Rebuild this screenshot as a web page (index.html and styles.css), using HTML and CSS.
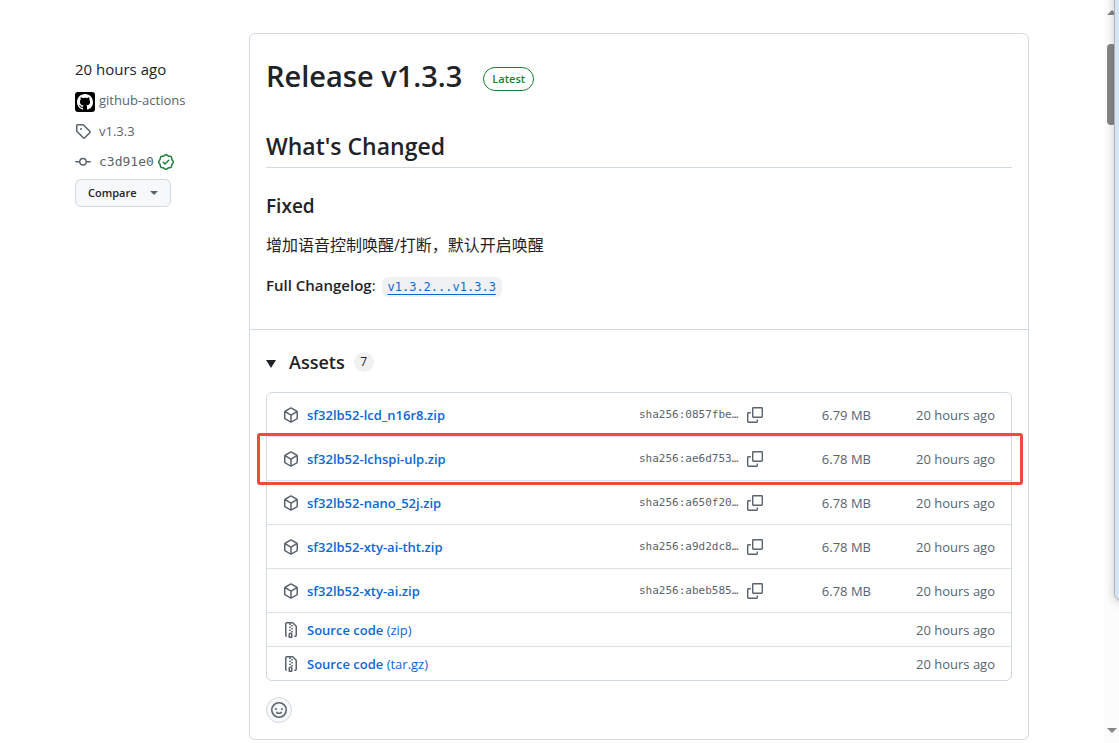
FILE: index.html
```html
<!DOCTYPE html>
<html lang="en">
<head>
<meta charset="utf-8">
<title>Release v1.3.3</title>
<link rel="stylesheet" href="styles.css">
</head>
<body>
<svg class="defs" aria-hidden="true">
  <symbol id="i-tag" viewBox="0 0 16 16"><path d="M1 7.775V2.75C1 1.784 1.784 1 2.75 1h5.025c.464 0 .91.184 1.238.513l6.25 6.25a1.75 1.75 0 0 1 0 2.474l-5.026 5.026a1.75 1.75 0 0 1-2.474 0l-6.25-6.25A1.752 1.752 0 0 1 1 7.775Zm1.5 0c0 .066.026.13.073.177l6.25 6.25a.25.25 0 0 0 .354 0l5.025-5.025a.25.25 0 0 0 0-.354l-6.25-6.25a.25.25 0 0 0-.177-.073H2.75a.25.25 0 0 0-.25.25ZM6 5a1 1 0 1 1 0 2 1 1 0 0 1 0-2Z"/></symbol>
  <symbol id="i-commit" viewBox="0 0 16 16"><path d="M11.93 8.5a4.002 4.002 0 0 1-7.86 0H.75a.75.75 0 0 1 0-1.5h3.32a4.002 4.002 0 0 1 7.86 0h3.32a.75.75 0 0 1 0 1.5Zm-1.43-.75a2.5 2.5 0 1 0-5 0 2.5 2.5 0 0 0 5 0Z"/></symbol>
  <symbol id="i-verified" viewBox="0 0 16 16"><path d="m9.585.52.929.68c.153.112.331.186.518.215l1.138.175a2.678 2.678 0 0 1 2.24 2.24l.174 1.139c.029.187.103.365.215.518l.68.928a2.677 2.677 0 0 1 0 3.17l-.68.928a1.174 1.174 0 0 0-.215.518l-.175 1.138a2.678 2.678 0 0 1-2.241 2.241l-1.138.175a1.17 1.17 0 0 0-.518.215l-.928.68a2.677 2.677 0 0 1-3.17 0l-.928-.68a1.174 1.174 0 0 0-.518-.215L3.83 14.41a2.678 2.678 0 0 1-2.24-2.24l-.175-1.138a1.17 1.17 0 0 0-.215-.518l-.68-.928a2.677 2.677 0 0 1 0-3.17l.68-.928c.112-.153.186-.331.215-.518l.175-1.14a2.678 2.678 0 0 1 2.24-2.24l1.139-.175c.187-.029.365-.103.518-.215l.928-.68a2.677 2.677 0 0 1 3.17 0ZM7.303 1.728l-.927.68a2.67 2.67 0 0 1-1.18.489l-1.137.174a1.179 1.179 0 0 0-.987.987l-.174 1.136a2.677 2.677 0 0 1-.489 1.18l-.68.928a1.18 1.18 0 0 0 0 1.394l.68.927c.256.348.424.753.489 1.18l.174 1.137c.078.509.478.909.987.987l1.136.174a2.67 2.67 0 0 1 1.18.489l.928.68c.414.305.979.305 1.394 0l.927-.68a2.67 2.67 0 0 1 1.18-.489l1.137-.174a1.18 1.18 0 0 0 .987-.987l.174-1.136a2.67 2.67 0 0 1 .489-1.18l.68-.928a1.176 1.176 0 0 0 0-1.394l-.68-.927a2.686 2.686 0 0 1-.489-1.18l-.174-1.137a1.179 1.179 0 0 0-.987-.987l-1.136-.174a2.677 2.677 0 0 1-1.18-.489l-.928-.68a1.176 1.176 0 0 0-1.394 0ZM11.28 6.78l-3.75 3.75a.75.75 0 0 1-1.06 0L4.72 8.78a.751.751 0 0 1 .018-1.042.751.751 0 0 1 1.042-.018L7 8.94l3.22-3.22a.751.751 0 0 1 1.042.018.751.751 0 0 1 .018 1.042Z"/></symbol>
  <symbol id="i-package" viewBox="0 0 16 16"><path d="m8.878.392 5.25 3.045c.54.314.872.89.872 1.514v6.098a1.75 1.75 0 0 1-.872 1.514l-5.25 3.045a1.75 1.75 0 0 1-1.756 0l-5.25-3.045A1.75 1.75 0 0 1 1 11.049V4.951c0-.624.332-1.201.872-1.514L7.122.392a1.75 1.75 0 0 1 1.756 0ZM7.875 1.69l-4.63 2.685L8 7.133l4.755-2.758-4.63-2.685a.248.248 0 0 0-.25 0ZM2.5 5.677v5.372c0 .09.047.171.125.216l4.625 2.683V8.432Zm6.25 8.271 4.625-2.683a.25.25 0 0 0 .125-.216V5.677L8.75 8.432Z"/></symbol>
  <symbol id="i-zip" viewBox="0 0 16 16"><path d="M3.5 1.75v11.5c0 .09.048.173.126.217a.75.75 0 0 1-.752 1.298A1.748 1.748 0 0 1 2 13.25V1.75C2 .784 2.784 0 3.75 0h5.586c.464 0 .909.185 1.237.513l2.914 2.914c.329.328.513.773.513 1.237v8.586A1.75 1.75 0 0 1 12.25 15h-.5a.75.75 0 0 1 0-1.5h.5a.25.25 0 0 0 .25-.25V4.664a.25.25 0 0 0-.073-.177L9.513 1.573a.25.25 0 0 0-.177-.073H7.25a.75.75 0 0 1 0 1.5h-.5a.75.75 0 0 1 0-1.5h-3a.25.25 0 0 0-.25.25Zm3.75 8.75h.5c.966 0 1.75.784 1.75 1.75v3a.75.75 0 0 1-.75.75h-2.5a.75.75 0 0 1-.75-.75v-3c0-.966.784-1.75 1.75-1.75ZM6 5.25a.75.75 0 0 1 .75-.75h.5a.75.75 0 0 1 0 1.5h-.5A.75.75 0 0 1 6 5.25Zm.75 2.25h.5a.75.75 0 0 1 0 1.5h-.5a.75.75 0 0 1 0-1.5ZM8 6.75A.75.75 0 0 1 8.75 6h.5a.75.75 0 0 1 0 1.5h-.5A.75.75 0 0 1 8 6.75ZM8.75 3h.5a.75.75 0 0 1 0 1.5h-.5a.75.75 0 0 1 0-1.5ZM8 9.75A.75.75 0 0 1 8.75 9h.5a.75.75 0 0 1 0 1.5h-.5A.75.75 0 0 1 8 9.75Zm-1 2.5v2.25h1v-2.25a.25.25 0 0 0-.25-.25h-.5a.25.25 0 0 0-.25.25Z"/></symbol>
  <symbol id="i-copy" viewBox="0 0 16 16"><path fill="none" stroke="currentColor" stroke-width="1.4" d="M6.4.7h8.2q.7 0 .7.7v8.2q0 .7-.7.7H6.400q-.7 0-.7-.7V1.400q0-.7.7-.7ZM3.800 5.700H1.400q-.7 0-.7.7v8.200q0 .7.7.7h8.200q.7 0 .7-.7V12.500"/></symbol>
  <symbol id="i-smiley" viewBox="0 0 16 16"><path d="M8 0a8 8 0 1 1 0 16A8 8 0 0 1 8 0ZM1.500 8a6.500 6.500 0 1 0 13 0 6.500 6.500 0 0 0-13 0Zm3.820 1.636a.75.75 0 0 1 1.038.175l.007.009c.103.118.22.222.35.31.264.178.683.37 1.285.37.602 0 1.020-.192 1.285-.371.13-.088.247-.192.35-.31l.007-.008a.75.75 0 0 1 1.222.87l-.022.030c-.182.248-.422.480-.710.680C9.643 11.721 8.942 12 8 12c-.942 0-1.643-.279-2.132-.611a3.200 3.200 0 0 1-.710-.710.75.75 0 0 1 .162-1.043ZM5 8a1 1 0 1 1 0-2 1 1 0 0 1 0 2Zm6 0a1 1 0 1 1 0-2 1 1 0 0 1 0 2Z"/></symbol>
  <symbol id="i-mark" viewBox="0 0 16 16"><path d="M8 0C3.580 0 0 3.580 0 8c0 3.540 2.290 6.530 5.470 7.590.4.070.55-.17.55-.38 0-.19-.010-.82-.010-1.490-2.010.37-2.530-.49-2.690-.94-.090-.23-.48-.94-.82-1.130-.28-.15-.68-.52-.010-.53.63-.010 1.080.58 1.230.82.72 1.210 1.870.87 2.330.66.070-.52.28-.87.51-1.070-1.780-.2-3.640-.89-3.640-3.950 0-.87.31-1.590.82-2.150-.080-.2-.36-1.020.080-2.120 0 0 .67-.21 2.200.82.64-.18 1.320-.27 2-.27s1.360.090 2 .27c1.530-1.040 2.200-.82 2.200-.82.44 1.100.16 1.920.080 2.120.51.56.82 1.270.82 2.150 0 3.070-1.870 3.750-3.650 3.950.29.25.54.73.54 1.480 0 1.070-.010 1.930-.010 2.200 0 .21.15.46.55.38A8.010 8.010 0 0 0 16 8c0-4.420-3.580-8-8-8Z"/></symbol>
</svg>

<div class="page">
  <aside class="meta">
    <p class="meta-time">20 hours ago</p>
    <a class="meta-row" href="#"><span class="avatar"><svg class="mark"><use href="#i-mark"/></svg></span>github-actions</a>
    <a class="meta-row" href="#"><svg class="icon"><use href="#i-tag"/></svg>v1.3.3</a>
    <div class="meta-row"><a class="commit" href="#"><svg class="icon"><use href="#i-commit"/></svg><code>c3d91e0</code></a><svg class="icon verified"><use href="#i-verified"/></svg></div>
    <button class="compare" type="button">Compare<span class="caret"></span></button>
  </aside>

  <main class="card">
    <section class="notes">
      <header class="title">
        <h1>Release v1.3.3</h1>
        <span class="latest">Latest</span>
      </header>
      <h2>What's Changed</h2>
      <h3>Fixed</h3>
      <p class="summary-text" lang="zh">增加语音控制唤醒/打断，默认开启唤醒</p>
      <p><strong>Full Changelog</strong>: <a class="changelog" href="#"><code>v1.3.2...v1.3.3</code></a></p>
    </section>

    <section class="downloads">
      <details open>
        <summary><span class="triangle"></span><span class="assets-title">Assets</span><span class="counter">7</span></summary>
        <table class="assets">
          <colgroup><col><col class="col-digest"><col class="col-size"><col class="col-date"></colgroup>
          <tbody>
            <tr>
              <td><a class="file" href="#"><svg class="icon"><use href="#i-package"/></svg><b>sf32lb52-lcd_n16r8.zip</b></a></td>
              <td><div class="digest"><code>sha256:0857fbe…</code><button type="button" aria-label="Copy digest"><svg class="icon"><use href="#i-copy"/></svg></button></div></td>
              <td>6.79 MB</td><td>20 hours ago</td>
            </tr>
            <tr class="marked">
              <td><a class="file" href="#"><svg class="icon"><use href="#i-package"/></svg><b>sf32lb52-lchspi-ulp.zip</b></a></td>
              <td><div class="digest"><code>sha256:ae6d753…</code><button type="button" aria-label="Copy digest"><svg class="icon"><use href="#i-copy"/></svg></button></div></td>
              <td>6.78 MB</td><td>20 hours ago</td>
            </tr>
            <tr>
              <td><a class="file" href="#"><svg class="icon"><use href="#i-package"/></svg><b>sf32lb52-nano_52j.zip</b></a></td>
              <td><div class="digest"><code>sha256:a650f20…</code><button type="button" aria-label="Copy digest"><svg class="icon"><use href="#i-copy"/></svg></button></div></td>
              <td>6.78 MB</td><td>20 hours ago</td>
            </tr>
            <tr>
              <td><a class="file" href="#"><svg class="icon"><use href="#i-package"/></svg><b>sf32lb52-xty-ai-tht.zip</b></a></td>
              <td><div class="digest"><code>sha256:a9d2dc8…</code><button type="button" aria-label="Copy digest"><svg class="icon"><use href="#i-copy"/></svg></button></div></td>
              <td>6.78 MB</td><td>20 hours ago</td>
            </tr>
            <tr>
              <td><a class="file" href="#"><svg class="icon"><use href="#i-package"/></svg><b>sf32lb52-xty-ai.zip</b></a></td>
              <td><div class="digest"><code>sha256:abeb585…</code><button type="button" aria-label="Copy digest"><svg class="icon"><use href="#i-copy"/></svg></button></div></td>
              <td>6.78 MB</td><td>20 hours ago</td>
            </tr>
            <tr class="source">
              <td><a class="file" href="#"><svg class="icon"><use href="#i-zip"/></svg><span><b>Source code</b> (zip)</span></a></td>
              <td></td><td></td><td>20 hours ago</td>
            </tr>
            <tr class="source">
              <td><a class="file" href="#"><svg class="icon"><use href="#i-zip"/></svg><span><b>Source code</b> (tar.gz)</span></a></td>
              <td></td><td></td><td>20 hours ago</td>
            </tr>
          </tbody>
        </table>
      </details>
      <button class="react" type="button" aria-label="Add reaction"><svg class="icon"><use href="#i-smiley"/></svg></button>
    </section>
  </main>
</div>

<div class="scrollbar" aria-hidden="true"><span class="arrow up"></span><span class="thumb"></span><span class="arrow down"></span></div>
<div class="side-window" aria-hidden="true"></div>
</body>
</html>
```

FILE: styles.css
```css
* { box-sizing: border-box; }

body {
  margin: 0;
  background: #fff;
  color: #1f2328;
  font-family: "Open Sans", "Noto Sans CJK SC", sans-serif;
  font-size: 13px;
  line-height: 20px;
}

h1, h2, h3, p { margin: 0; }
h1, h2, h3, b, strong { font-weight: 600; }
a { color: #0969da; text-decoration: none; }
code { font-family: "DejaVu Sans Mono", monospace; }
button { font: inherit; color: inherit; cursor: pointer; }

.defs { position: absolute; width: 0; height: 0; }
.icon { display: block; width: 16px; height: 16px; flex: none; fill: #59636e; color: #59636e; }

.page {
  display: flex;
  gap: 16px;
  padding: 33px 90px 3px 75px;
}

/* Release details */
.meta {
  flex: none;
  width: 158px;
  padding-top: 26px;
}
.meta-time { font-size: 15px; }
.meta-row {
  display: flex;
  align-items: center;
  gap: 4px;
  height: 20px;
  margin-top: 11px;
  color: #59636e;
}
.meta-row .icon { margin-right: 4px; }
.commit { display: flex; align-items: center; gap: 4px; color: inherit; }
.commit code { font-size: 13px; }
.meta-row .verified { margin: 0; fill: #1a7f37; }
.avatar {
  display: grid;
  place-items: center;
  width: 20px;
  height: 20px;
  margin-top: 3px;
  border-radius: 3px;
  background: #000;
}
.mark { width: 16px; height: 16px; fill: #fff; }
.compare {
  display: flex;
  align-items: center;
  gap: 13px;
  height: 28px;
  margin-top: 7px;
  padding: 0 12px;
  border: 1px solid #d1d9e0;
  border-radius: 6px;
  background: #f6f8fa;
  font-size: 11px;
  font-weight: 600;
}
.caret {
  border: 4px solid transparent;
  border-top-color: #59636e;
  border-bottom: 0;
}

/* Release card */
.card {
  flex: 1;
  min-width: 0;
  border: 1px solid #d1d9e0;
  border-radius: 6px;
}
.notes { padding: 16px 16px 30px; }
.title { display: flex; align-items: center; gap: 21px; }
h1 { font-size: 29px; line-height: 52px; }
.latest {
  margin-top: 6px;
  padding: 0 8px;
  border: 1px solid #1a7f37;
  border-radius: 12px;
  color: #1a7f37;
  font-size: 11px;
  font-weight: 600;
  line-height: 22px;
}
h2 {
  margin-top: 29px;
  padding-bottom: 6px;
  border-bottom: 1px solid #d1d9e0;
  font-size: 23px;
  line-height: 30px;
}
h3 { margin: 24px 0 13px; font-size: 19px; line-height: 28px; }
.notes p { font-size: 15px; line-height: 24px; margin-bottom: 16px; }
.notes .summary-text { font-size: 16px; }
.notes p:last-child { margin-bottom: 0; }
.changelog code {
  margin-left: 2px;
  padding: 3px 6px;
  border-radius: 6px;
  background: #eff1f3;
  font-size: 12px;
}
.changelog { text-decoration: underline; text-underline-offset: 3px; }

.downloads {
  padding: 16px;
  border-top: 1px solid #d1d9e0;
}
summary {
  display: flex;
  align-items: center;
  height: 32px;
  margin-bottom: 14px;
  list-style: none;
}
.triangle {
  margin: 4px 13px 0 0;
  border: 5px solid transparent;
  border-top: 8px solid #1f2328;
  border-bottom: 0;
}
.assets-title { font-size: 18px; font-weight: 600; }
.counter {
  min-width: 20px;
  margin-left: 9px;
  border-radius: 10px;
  background: #eff1f3;
  font-size: 12px;
  text-align: center;
}

.assets {
  width: 100%;
  table-layout: fixed;
  border: 1px solid #d1d9e0;
  border-radius: 6px;
  border-spacing: 0;
}
.col-digest { width: 132px; }
.col-size { width: 100px; }
.col-date { width: 140px; }
.assets td {
  height: 44px;
  padding: 0;
  border-top: 1px solid #dce1e6;
  color: #59636e;
  white-space: nowrap;
}
.assets tr:first-child td { height: 43px; border-top: 0; }
.assets .source td { height: 34px; }
.assets td:first-child { padding-left: 16px; }
.assets td:nth-child(n + 3) { text-align: right; }
.assets td:last-child { padding-right: 16px; }
.file { display: flex; align-items: center; gap: 8px; }
.digest { display: flex; align-items: center; gap: 9px; }
.digest code { font-size: 11px; }
.digest button { padding: 0; border: 0; background: none; }

/* Red frame drawn over the highlighted download */
.marked { position: relative; }
.marked td:first-child::after {
  content: "";
  position: absolute;
  inset: -3px -12px -5px -10px;
  border: 3px solid #f04a3f;
  border-radius: 3px;
  pointer-events: none;
}

.react {
  display: grid;
  place-items: center;
  width: 26px;
  height: 26px;
  margin-top: 16px;
  padding: 0;
  border: 1px solid #d1d9e0;
  border-radius: 50%;
  background: #f6f8fa;
}

/* Window edge */
.scrollbar {
  position: fixed;
  inset: 0 0 0 auto;
  width: 15px;
  display: flex;
  flex-direction: column;
  align-items: center;
  padding: 10px 0;
  background: #fcfcfc;
}
.arrow { border: 5px solid transparent; }
.up { border-top: 0; border-bottom-color: #858585; }
.down { margin-top: auto; border-bottom: 0; border-top-color: #858585; }
.thumb { width: 9px; height: 81px; margin-top: 29px; border-radius: 4px; background: #858585; }
.side-window {
  position: fixed;
  top: -10px;
  right: -10px;
  width: 15px;
  height: 611px;
  border: 1px solid #a9b4c2;
  border-radius: 8px;
  background: #d6e4f5;
  box-shadow: 0 2px 10px rgba(0, 0, 0, 0.2);
}
```
